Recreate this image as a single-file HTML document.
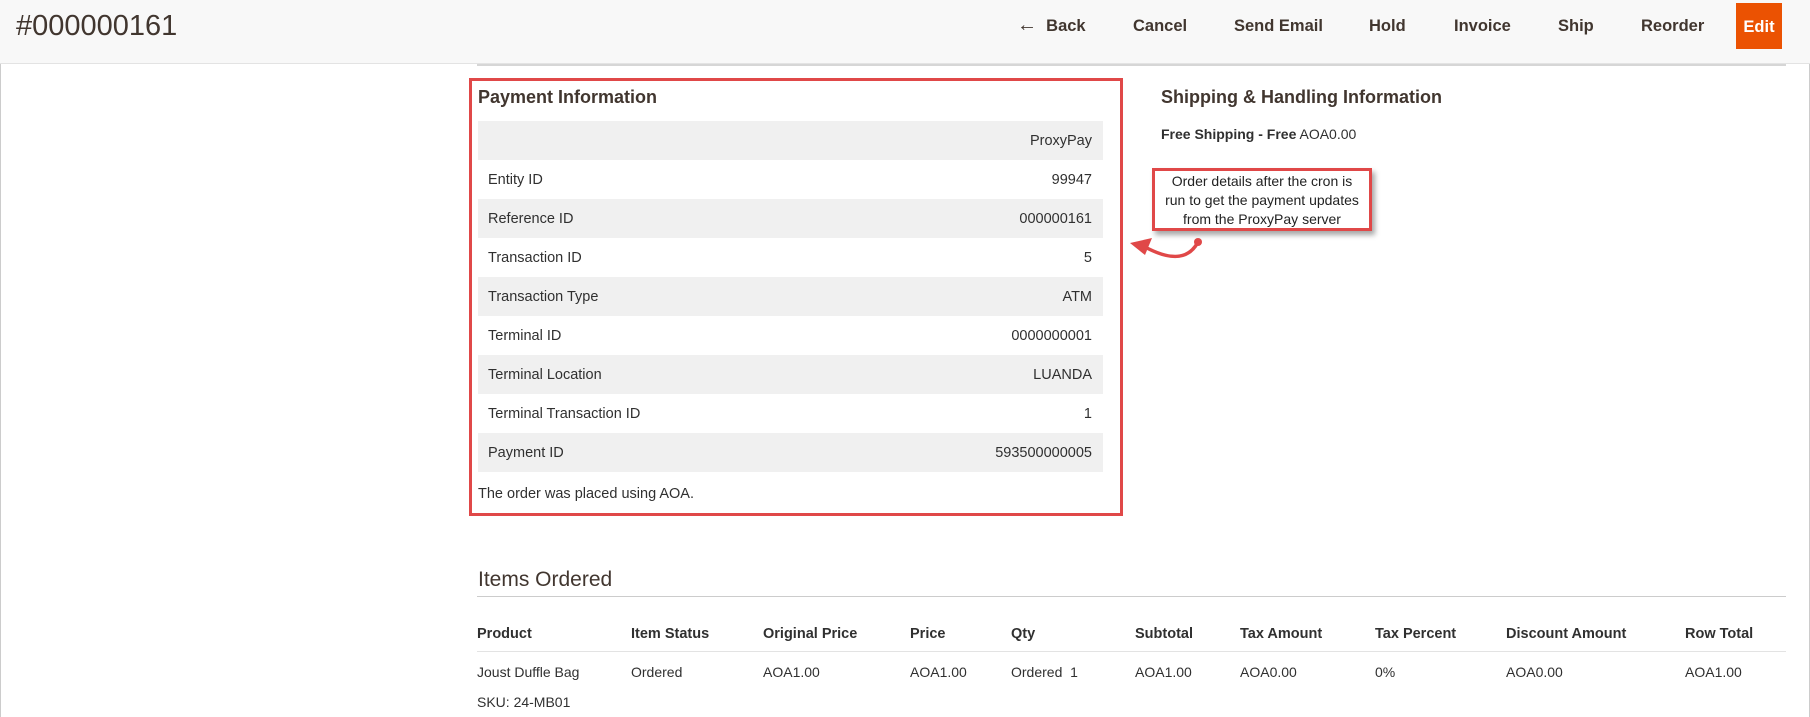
<!DOCTYPE html>
<html><head><meta charset="utf-8"><style>
*{margin:0;padding:0;box-sizing:border-box}
body{width:1810px;height:717px;overflow:hidden;background:#fff;font-family:"Liberation Sans",sans-serif;color:#303030;position:relative}
.hdr{position:absolute;left:0;top:0;width:1810px;height:64px;background:#f8f8f8;border-bottom:1px solid #e3e3e3}
.title{position:absolute;left:16px;top:10px;font-size:29px;color:#41362f}
.btn{position:absolute;top:17px;font-size:16.5px;font-weight:bold;color:#41362f}
.edit{position:absolute;left:1736px;top:3px;width:46px;height:46px;background:#eb5202;color:#fff;font-weight:bold;font-size:16.5px;text-align:center;line-height:48px}
.a{position:absolute}
.red{position:absolute;left:469px;top:78px;width:654px;height:438px;border:3px solid #e04848}
.row{position:absolute;left:478px;width:625px;height:39px;font-size:14.5px;color:#303030;line-height:41px}
.row .l{position:absolute;left:10px}
.row .r{position:absolute;right:11px}
.g{background:#f0f0f0}
.th{position:absolute;top:626px;font-size:14.5px;font-weight:bold}
.td{position:absolute;top:664px;font-size:14px}
</style></head><body>
<div class="hdr"></div>
<div class="title">#000000161</div>
<div class="btn" style="left:1017px"><span style="font-size:20px;font-weight:normal;line-height:16px">&#8592;</span>&nbsp; Back</div>
<div class="btn" style="left:1133px">Cancel</div>
<div class="btn" style="left:1234px">Send Email</div>
<div class="btn" style="left:1369px">Hold</div>
<div class="btn" style="left:1454px">Invoice</div>
<div class="btn" style="left:1558px">Ship</div>
<div class="btn" style="left:1641px">Reorder</div>
<div class="edit">Edit</div>
<div class="a" style="left:0;top:64px;width:1px;height:653px;background:#ccc"></div>
<div class="a" style="left:1809px;top:64px;width:1px;height:653px;background:#ccc"></div>
<div class="a" style="left:477px;top:64px;width:1309px;height:2px;background:#d6d6d6"></div>
<div class="red"></div>
<div class="a" style="left:478px;top:87px;font-size:18px;font-weight:bold;color:#41362f">Payment Information</div>
<div class="row g" style="top:121px"><span class="r">ProxyPay</span></div>
<div class="row" style="top:160px"><span class="l">Entity ID</span><span class="r">99947</span></div>
<div class="row g" style="top:199px"><span class="l">Reference ID</span><span class="r">000000161</span></div>
<div class="row" style="top:238px"><span class="l">Transaction ID</span><span class="r">5</span></div>
<div class="row g" style="top:277px"><span class="l">Transaction Type</span><span class="r">ATM</span></div>
<div class="row" style="top:316px"><span class="l">Terminal ID</span><span class="r">0000000001</span></div>
<div class="row g" style="top:355px"><span class="l">Terminal Location</span><span class="r">LUANDA</span></div>
<div class="row" style="top:394px"><span class="l">Terminal Transaction ID</span><span class="r">1</span></div>
<div class="row g" style="top:433px"><span class="l">Payment ID</span><span class="r">593500000005</span></div>
<div class="a" style="left:478px;top:486px;font-size:14.5px">The order was placed using AOA.</div>
<div class="a" style="left:1161px;top:87px;font-size:18px;font-weight:bold;color:#41362f">Shipping &amp; Handling Information</div>
<div class="a" style="left:1161px;top:126px;font-size:14px"><b>Free Shipping - Free</b> AOA0.00</div>
<div class="a" style="left:1152px;top:168px;width:220px;height:63px;border:3px solid #e04848;background:#fff;box-shadow:3px 4px 5px rgba(0,0,0,.35);font-size:14px;line-height:19px;text-align:center;padding-top:1px;color:#222;white-space:nowrap">Order details after the cron is<br>run to get the payment updates<br>from the ProxyPay server</div>
<svg class="a" style="left:1120px;top:225px" width="100" height="50">
<path d="M78 17 C70 32 55 38 25 22" stroke="#e04848" stroke-width="3.5" fill="none"/>
<circle cx="78" cy="17" r="4" fill="#e04848"/>
<path d="M10 18 L32 13 L25 30 Z" fill="#e04848"/>
</svg>
<div class="a" style="left:478px;top:568px;font-size:21px;color:#41362f">Items Ordered</div>
<div class="a" style="left:477px;top:596px;width:1309px;height:1px;background:#ccc"></div>
<div class="th" style="left:477px">Product</div>
<div class="th" style="left:631px">Item Status</div>
<div class="th" style="left:763px">Original Price</div>
<div class="th" style="left:910px">Price</div>
<div class="th" style="left:1011px">Qty</div>
<div class="th" style="left:1135px">Subtotal</div>
<div class="th" style="left:1240px">Tax Amount</div>
<div class="th" style="left:1375px">Tax Percent</div>
<div class="th" style="left:1506px">Discount Amount</div>
<div class="th" style="left:1685px">Row Total</div>
<div class="a" style="left:477px;top:651px;width:1309px;height:1px;background:#e3e3e3"></div>
<div class="td" style="left:477px">Joust Duffle Bag</div>
<div class="td" style="left:631px">Ordered</div>
<div class="td" style="left:763px">AOA1.00</div>
<div class="td" style="left:910px">AOA1.00</div>
<div class="td" style="left:1011px">Ordered&nbsp; 1</div>
<div class="td" style="left:1135px">AOA1.00</div>
<div class="td" style="left:1240px">AOA0.00</div>
<div class="td" style="left:1375px">0%</div>
<div class="td" style="left:1506px">AOA0.00</div>
<div class="td" style="left:1685px">AOA1.00</div>
<div class="td" style="left:477px;top:694px">SKU: 24-MB01</div>
</body></html>
